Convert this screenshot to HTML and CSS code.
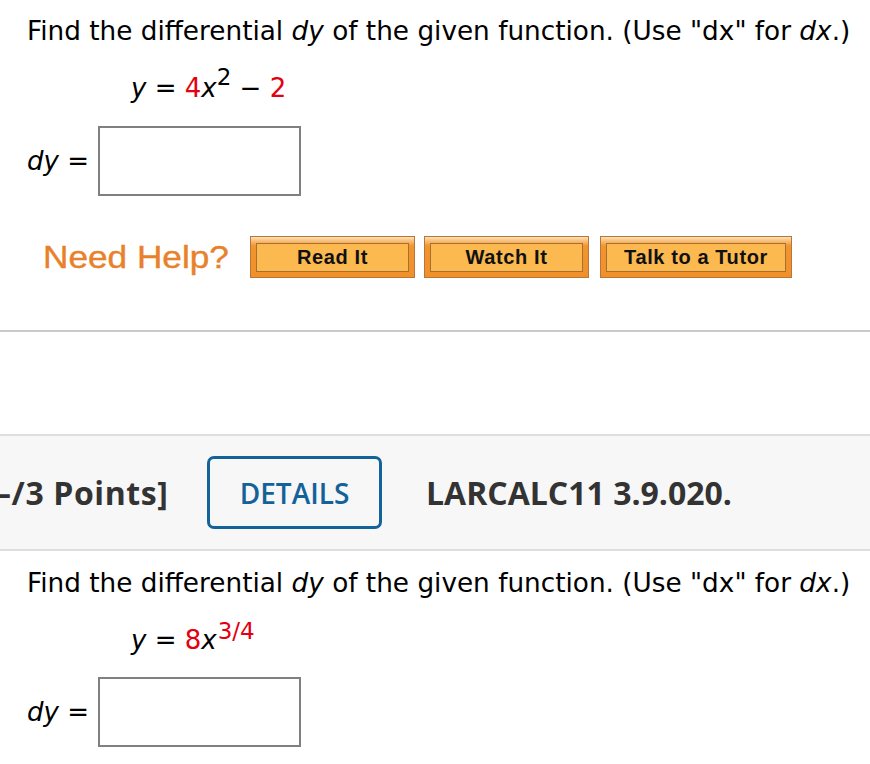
FILE: index.html
```html
<!DOCTYPE html>
<html>
<head>
<meta charset="utf-8">
<link rel="stylesheet" href="styles.css">
</head>
<body>
<div class="q">
  <p class="prompt">Find the differential <i>dy</i> of the given function. (Use "dx" for <i>dx</i>.)</p>
  <div class="eq"><i>y</i> = <span class="red">4</span><i>x</i><sup class="s1">2</sup> &minus; <span class="red">2</span></div>
  <div class="ans"><span class="lbl"><i>dy</i> =</span><span class="box"></span></div>
  <div class="help">
    <span class="need">Need Help?</span>
    <span class="btn w165"><span class="in">Read It</span></span>
    <span class="btn w165"><span class="in">Watch It</span></span>
    <span class="btn w191"><span class="in">Talk to a Tutor</span></span>
  </div>
</div>
<div class="rule"></div>
<div class="gap"></div>
<div class="band">
  <span class="pts">&ndash;/3 Points]</span>
  <span class="details">DETAILS</span>
  <span class="code">LARCALC11 3.9.020.</span>
</div>
<div class="q q2">
  <p class="prompt">Find the differential <i>dy</i> of the given function. (Use "dx" for <i>dx</i>.)</p>
  <div class="eq"><i>y</i> = <span class="red">8</span><i>x</i><sup class="red s2">3/4</sup></div>
  <div class="ans"><span class="lbl"><i>dy</i> =</span><span class="box"></span></div>
</div>
</body>
</html>
```

FILE: styles.css
```css
html, body { margin: 0; padding: 0; background: #fff; }
body { width: 870px; height: 764px; overflow: hidden; font-family: "DejaVu Sans", Verdana, sans-serif; color: #000; }
.q { padding-left: 27px; }
.prompt { margin: 0; padding-top: 14px; font-size: 26.3px; line-height: 34px; white-space: nowrap; }
.eq { padding-left: 104px; margin-top: 23px; font-size: 26px; line-height: 34px; }
.eq sup { line-height: 0; }
.s1 { font-size: 23px; vertical-align: 12px; }
.s2 { font-size: 23px; vertical-align: 10px; margin-left: 1px; }
.red { color: #e3000f; }
.ans { display: flex; align-items: center; margin-top: 21px; }
.lbl { font-size: 26px; width: 71px; }
.box { display: block; width: 199px; height: 66px; border: 2px solid #808080; background: #fff; }
.help { display: flex; align-items: center; margin-top: 40px; padding-left: 16px; }
.need { font-family: "Liberation Sans", Arial, sans-serif; font-size: 32px; color: #e8812a; transform: scaleX(1.1); transform-origin: left; width: 207px; -webkit-text-stroke: 0.4px #e8812a; }
.btn { display: flex; box-sizing: border-box; height: 42px; margin-right: 9px; padding: 6px 5px 5px; background: linear-gradient(#fde0b8, #f2952f 22%, #f0902a); border: 1px solid #b8763a; }
.w165 { width: 165px; }
.w191 { width: 192px; margin-left: 2px; }
.in { flex: 1; display: flex; align-items: center; justify-content: center; background: #fbb950; border: 1px solid #a8702e; font-family: "Liberation Sans", Arial, sans-serif; font-weight: bold; font-size: 20px; color: #111; letter-spacing: 0.6px; }
.rule { margin-top: 52px; height: 2px; background: #cacaca; }
.gap { height: 102px; }
.band { display: flex; align-items: center; height: 113px; background: #f7f7f7; border-top: 2px solid #dedede; border-bottom: 2px solid #dedede; font-family: "Open Sans", sans-serif; font-weight: 700; font-size: 32px; color: #333; }
.pts { flex: 0 0 auto; width: 212px; margin-left: -5px; white-space: nowrap; letter-spacing: 0.6px; }
.details { box-sizing: border-box; display: flex; align-items: center; justify-content: center; width: 175px; height: 73px; border: 3px solid #14629a; border-radius: 7px; color: #14629a; font-weight: 600; font-size: 28px; margin-right: 44px; }
.code { white-space: nowrap; }
.q2 .prompt { padding-top: 15px; }
.q2 .eq { margin-top: 23px; }
.q2 .ans { margin-top: 20px; }
```
